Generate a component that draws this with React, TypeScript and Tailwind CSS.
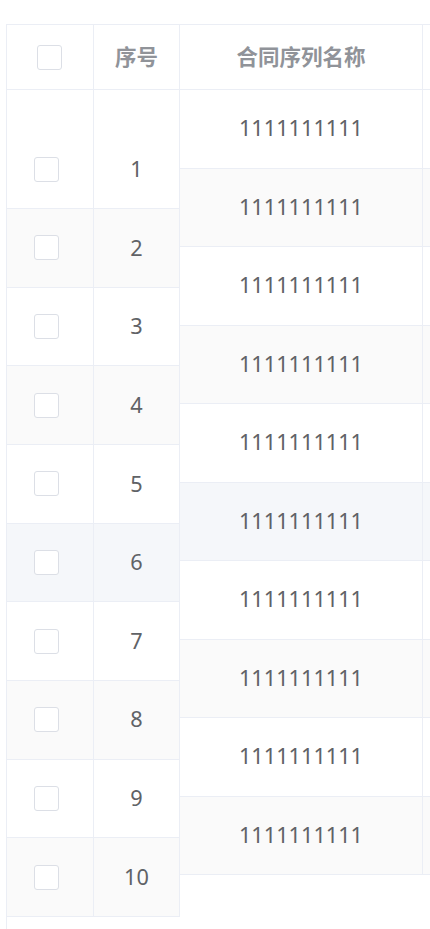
import React from 'react';

const rows = Array.from({ length: 10 }, (_, i) => ({ id: i + 1, name: '1111111111' }));

// striped rows, 6th one is the hovered row
const rowBg = (i: number) =>
  i === 5 ? 'bg-[#f5f7fa]' : i % 2 === 1 ? 'bg-[#fafafa]' : 'bg-white';

function Checkbox() {
  return <span className="block w-[25px] h-[25px] rounded-[3px] border border-[#dcdfe6] bg-white" />;
}

export default function App() {
  return (
    <div
      className="w-[430px] h-[929px] overflow-hidden bg-white pt-[24px] pl-[6px]"
      style={{ fontFamily: '"Noto Sans", "Noto Sans CJK SC", sans-serif' }}
    >
      <div className="relative h-[905px] w-[520px] border-l border-t border-[#ebeef5]">
        {/* main table */}
        <div className="flex h-[65px] border-b border-[#ebeef5] bg-white">
          <div className="w-[87px] border-r border-[#ebeef5]" />
          <div className="w-[86px] border-r border-[#ebeef5]" />
          <div className="w-[243px] border-r border-[#ebeef5] flex items-center justify-center text-[21.5px] font-bold text-[#909399]">
            合同序列名称
          </div>
          <div className="w-[100px]" />
        </div>
        {rows.map((r, i) => (
          <div key={r.id} className={`flex h-[78.5px] border-b border-[#ebeef5] ${rowBg(i)}`}>
            <div className="w-[87px] border-r border-[#ebeef5]" />
            <div className="w-[86px] border-r border-[#ebeef5]" />
            <div className="w-[243px] border-r border-[#ebeef5] flex items-center justify-center text-[21.7px] text-[#606266]">
              {r.name}
            </div>
            <div className="w-[100px]" />
          </div>
        ))}

        {/* fixed left columns, out of sync with the body */}
        <div className="absolute left-0 top-0 w-[173px] border-r border-[#ebeef5] bg-white">
          <div className="flex h-[65px] border-b border-[#ebeef5]">
            <div className="w-[87px] border-r border-[#ebeef5] flex items-center pl-[30px]">
              <Checkbox />
            </div>
            <div className="w-[85px] flex items-center justify-center text-[21.5px] font-bold text-[#909399]">
              序号
            </div>
          </div>
          {rows.map((r, i) => {
            const pad = i === 0 ? 'pt-[40px]' : '';
            return (
              <div
                key={r.id}
                className={`flex border-b border-[#ebeef5] ${i === 0 ? 'h-[119px]' : 'h-[78.67px]'} ${rowBg(i)}`}
              >
                <div className={`w-[87px] border-r border-[#ebeef5] flex items-center pl-[27px] ${pad}`}>
                  <Checkbox />
                </div>
                <div className={`w-[85px] flex items-center justify-center text-[21.7px] text-[#606266] ${pad}`}>
                  {r.id}
                </div>
              </div>
            );
          })}
        </div>
      </div>
    </div>
  );
}
